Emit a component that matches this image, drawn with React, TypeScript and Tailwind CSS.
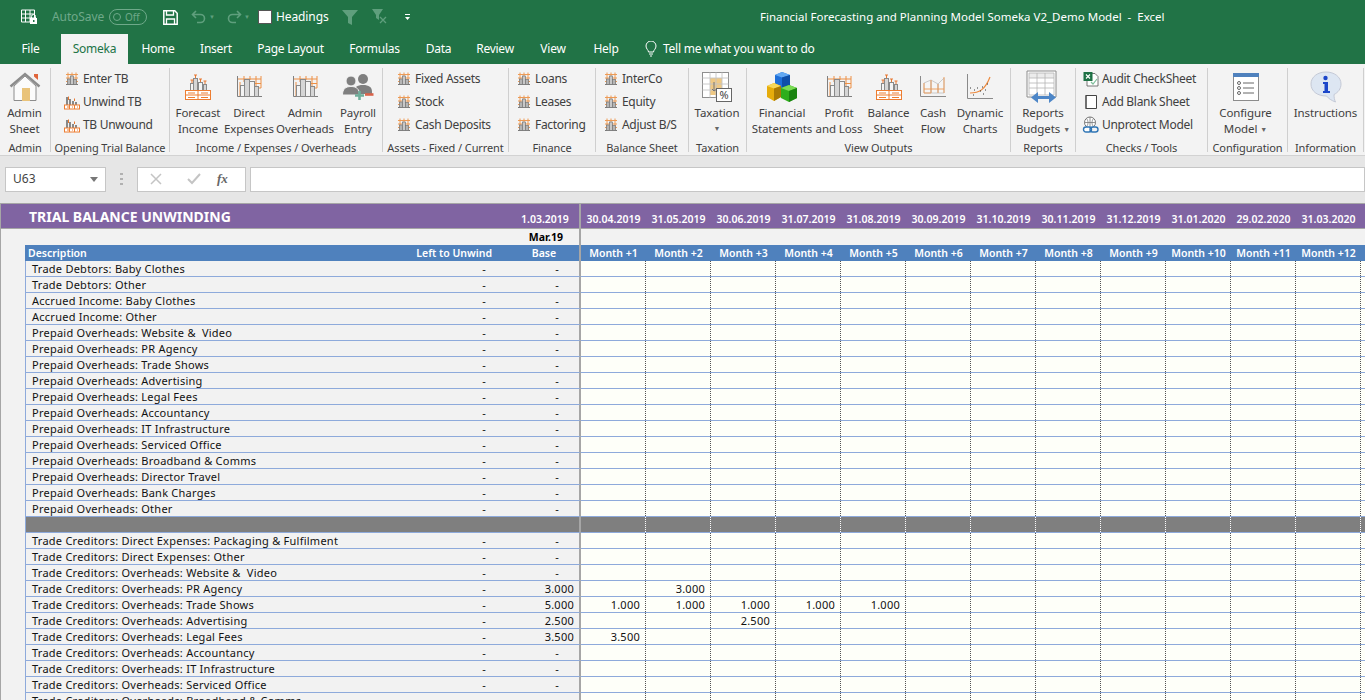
import type { ReactNode } from "react";

const DATES = ["30.04.2019", "31.05.2019", "30.06.2019", "31.07.2019", "31.08.2019", "30.09.2019", "31.10.2019", "30.11.2019", "31.12.2019", "31.01.2020", "29.02.2020", "31.03.2020"];

const ROWS: { name: string; base: string; months?: Record<number, string>; gray?: boolean }[] = [
  { name: "Trade Debtors: Baby Clothes", base: "-" },
  { name: "Trade Debtors: Other", base: "-" },
  { name: "Accrued Income: Baby Clothes", base: "-" },
  { name: "Accrued Income: Other", base: "-" },
  { name: "Prepaid Overheads: Website &  Video", base: "-" },
  { name: "Prepaid Overheads: PR Agency", base: "-" },
  { name: "Prepaid Overheads: Trade Shows", base: "-" },
  { name: "Prepaid Overheads: Advertising", base: "-" },
  { name: "Prepaid Overheads: Legal Fees", base: "-" },
  { name: "Prepaid Overheads: Accountancy", base: "-" },
  { name: "Prepaid Overheads: IT Infrastructure", base: "-" },
  { name: "Prepaid Overheads: Serviced Office", base: "-" },
  { name: "Prepaid Overheads: Broadband & Comms", base: "-" },
  { name: "Prepaid Overheads: Director Travel", base: "-" },
  { name: "Prepaid Overheads: Bank Charges", base: "-" },
  { name: "Prepaid Overheads: Other", base: "-" },
  { name: "", base: "", gray: true },
  { name: "Trade Creditors: Direct Expenses: Packaging & Fulfilment", base: "-" },
  { name: "Trade Creditors: Direct Expenses: Other", base: "-" },
  { name: "Trade Creditors: Overheads: Website &  Video", base: "-" },
  { name: "Trade Creditors: Overheads: PR Agency", base: "3.000", months: { 1: "3.000" } },
  { name: "Trade Creditors: Overheads: Trade Shows", base: "5.000", months: { 0: "1.000", 1: "1.000", 2: "1.000", 3: "1.000", 4: "1.000" } },
  { name: "Trade Creditors: Overheads: Advertising", base: "2.500", months: { 2: "2.500" } },
  { name: "Trade Creditors: Overheads: Legal Fees", base: "3.500", months: { 0: "3.500" } },
  { name: "Trade Creditors: Overheads: Accountancy", base: "-" },
  { name: "Trade Creditors: Overheads: IT Infrastructure", base: "-" },
  { name: "Trade Creditors: Overheads: Serviced Office", base: "-" },
  { name: "Trade Creditors: Overheads: Broadband & Comms", base: "-" },
];

const TABS = [
  { label: "File", w: "w-[61px]" },
  { label: "Someka", w: "w-[67px]", active: true },
  { label: "Home", w: "w-[60px]" },
  { label: "Insert", w: "w-[56px]" },
  { label: "Page Layout", w: "w-[93px]" },
  { label: "Formulas", w: "w-[75px]" },
  { label: "Data", w: "w-[53px]" },
  { label: "Review", w: "w-[60px]" },
  { label: "View", w: "w-[56px]" },
  { label: "Help", w: "w-[50px]" },
];

function GridChart({ size = 14 }: { size?: number }) {
  return (
    <svg width={size} height={size} viewBox="0 0 14 14" fill="none">
      <path d="M1 2.500h12M1 6h12M1 9.500h12M3 0.500v12M7 0.500v12M11 0.500v12" stroke="#ed9a55" strokeWidth="1" />
      <path d="M1 12.500h12" stroke="#777" strokeWidth="1" />
      <rect x="2.500" y="7" width="3" height="5.500" fill="#b5b5b5" stroke="#777" strokeWidth="0.7" />
      <rect x="5.500" y="4" width="3" height="8.500" fill="#c8c8c8" stroke="#777" strokeWidth="0.7" />
      <rect x="8.500" y="7.500" width="3" height="5" fill="#b5b5b5" stroke="#777" strokeWidth="0.7" />
    </svg>
  );
}

function BigGridChart() {
  return (
    <svg width="25" height="21" viewBox="0 0 25 21" fill="none">
      <path d="M7 0v6M13 0v4M19 0v20M24 0v12M1 3h23M15 7.500h9M19 12h5M3 6v14" stroke="#ed8f45" strokeWidth="1" />
      <path d="M0.500 0v20.500H25" stroke="#7f7f7f" strokeWidth="1" />
      <rect x="3.500" y="9.500" width="4" height="11" fill="#f4f4f4" stroke="#8a8a8a" />
      <rect x="7.500" y="3.500" width="5" height="17" fill="#d6d6d6" stroke="#8a8a8a" />
      <rect x="12.500" y="5.500" width="5" height="15" fill="#f4f4f4" stroke="#8a8a8a" />
      <rect x="17.500" y="10.500" width="4" height="10" fill="#d6d6d6" stroke="#8a8a8a" />
    </svg>
  );
}

function TrayChart() {
  return (
    <svg width="26" height="26" viewBox="0 0 26 26" fill="none">
      <rect x="5.500" y="9.500" width="3" height="7" fill="#f4f4f4" stroke="#8a8a8a" />
      <rect x="8.500" y="4.500" width="4" height="12" fill="#d6d6d6" stroke="#8a8a8a" />
      <rect x="13.500" y="8.500" width="4" height="8" fill="#f4f4f4" stroke="#8a8a8a" />
      <rect x="18.500" y="10.500" width="3" height="6" fill="#d6d6d6" stroke="#8a8a8a" />
      <path d="M7 9V6M10.500 4V1M15.500 8V5M20 10V7M5.500 6h3M9 1h3M14 5h3M18.500 7h3" stroke="#e8772e" strokeWidth="1" />
      <rect x="0.500" y="16.500" width="25" height="9" fill="#fff" stroke="#ed7d31" />
      <path d="M0.500 21h25M13 16.500v9M3 19h7M16 19h7M3 23.500h7M16 23.500h7" stroke="#ed7d31" strokeWidth="1" />
    </svg>
  );
}

function SmallTray() {
  return (
    <svg width="16" height="16" viewBox="0 0 16 16" fill="none">
      <path d="M3 11V3M6 11V5M9 11V7M12 11V8" stroke="#888" strokeWidth="2" />
      <path d="M4.500 2.500V6M10.500 4.500V7" stroke="#e8772e" strokeWidth="1" />
      <rect x="0.500" y="11" width="15" height="4" fill="#fff" stroke="#ed7d31" />
      <path d="M5.500 11v4M10.500 11v4M3 13h2M8 13h1M13 13h1" stroke="#ed7d31" />
    </svg>
  );
}

function HouseIcon() {
  return (
    <svg width="32" height="30" viewBox="0 0 32 30" fill="none">
      <path d="M25 2h4v6l-4-3.500z" fill="#e0653a" />
      <path d="M5 14v14.500h22V14L16 4z" fill="#fbfbfb" stroke="#8c8c8c" strokeWidth="1" />
      <path d="M1.500 14.500L16 2l14.500 12.500" stroke="#8c8c8c" strokeWidth="2.400" fill="none" />
      <rect x="13" y="16" width="8" height="13" fill="#e9c37a" />
    </svg>
  );
}

function PayrollIcon() {
  return (
    <svg width="32" height="26" viewBox="0 0 32 26" fill="none">
      <circle cx="21" cy="5" r="5" fill="#7f7f7f" />
      <path d="M12 18c0-5 3-7 9-7s9 2 9 7v2H12z" fill="#7f7f7f" />
      <circle cx="9" cy="7" r="5" fill="#7f7f7f" stroke="#f3f3f3" strokeWidth="1" />
      <path d="M0.500 21c0-6 3-8.500 8.500-8.500s8.500 2.500 8.500 8.500z" fill="#7f7f7f" stroke="#f3f3f3" strokeWidth="1" />
      <path d="M13 21.500h9M17.500 17v9" stroke="#6fae9b" strokeWidth="2.600" />
      <path d="M23 20.500h8.500" stroke="#d9634a" strokeWidth="2.600" />
    </svg>
  );
}

function TaxIcon() {
  return (
    <svg width="32" height="32" viewBox="0 0 32 32" fill="none">
      <rect x="1.500" y="1.500" width="26" height="25" fill="#fff" stroke="#8f8f8f" />
      <rect x="9" y="7" width="12" height="17" fill="#efc984" />
      <path d="M1.500 7h26M1.500 13h26M1.500 19h26M9 1.500v25M15 1.500v25M21 1.500v25" stroke="#c4c4c4" strokeWidth="0.9" />
      <path d="M13 11v9l-2-2M13 20l3-2" stroke="#777" strokeWidth="1" />
      <rect x="15.500" y="17.500" width="15" height="13" fill="#fff" stroke="#666" />
      <text x="23" y="28" fontSize="11" textAnchor="middle" fill="#444" fontFamily="'Noto Sans', sans-serif">%</text>
    </svg>
  );
}

function CubesIcon() {
  return (
    <svg width="32" height="32" viewBox="0 0 32 32" fill="none">
      <path d="M9 4l7-3 8 3v11l-8 3-7-3z" fill="#1f6fd8" />
      <path d="M9 4l7 2.500 8-2.500-8-3z" fill="#62a8f2" />
      <path d="M16 6.500V18l8-3V4z" fill="#0f4fa8" />
      <path d="M1 15l7-3 7 3v11l-7 4-7-4z" fill="#e6ac0b" />
      <path d="M1 15l7 2.500 7-2.500-7-3z" fill="#f7d758" />
      <path d="M8 17.500V30l7-4V15z" fill="#a97a04" />
      <path d="M15 17l8-3 8 3v10l-8 4-8-4z" fill="#2fae1c" />
      <path d="M15 17l8 3 8-3-8-3z" fill="#7bdb54" />
      <path d="M23 20v11l8-4V17z" fill="#1a8310" />
    </svg>
  );
}

function CashFlowIcon() {
  return (
    <svg width="26" height="21" viewBox="0 0 26 21" fill="none">
      <path d="M0.500 0v20.500H26" stroke="#8a8a8a" />
      <path d="M4 7l7-3v13H4zM11 4l7 4v9h-7zM18 8l6-6v15h-6z" fill="#f5f5f5" stroke="#c9c9c9" />
      <path d="M4 7v10h7V4M18 8v9M24 1v16M4 13h20" stroke="#ed9a55" strokeWidth="0.9" />
    </svg>
  );
}

function TrendIcon() {
  return (
    <svg width="26" height="25" viewBox="0 0 26 25" fill="none">
      <path d="M0.500 0v24.500H26" stroke="#8a8a8a" />
      <path d="M3 19c9 0 15-3 20-16" stroke="#ed8a3e" strokeWidth="1.200" />
      <path d="M3 14h1M7 16h1M10 14h1M13 17h1M15 13h1M18 16h1M20 10h1M6 21h1M16 20h1" stroke="#333" strokeWidth="1" />
    </svg>
  );
}

function ReportsIcon() {
  return (
    <svg width="34" height="33" viewBox="0 0 34 33" fill="none">
      <path d="M1 1h29v26H1z" fill="#fff" stroke="#8c8c8c" />
      <path d="M3 3h25v5H3z" fill="#ececec" />
      <path d="M3 3h25v22H3zM3 8h25M3 13h25M3 18h25M11 3v22M19 3v22" stroke="#b5b5b5" strokeWidth="0.8" />
      <path d="M9 27.500h17" stroke="#4d86c7" strokeWidth="3" />
      <path d="M12 22L5 27.500l7 5.500zM23 22l7 5.500-7 5.500z" fill="#4d86c7" />
    </svg>
  );
}

function AuditIcon() {
  return (
    <svg width="16" height="16" viewBox="0 0 16 16" fill="none">
      <path d="M4 2.500h8l3 3V15H4z" fill="#fff" stroke="#555" strokeWidth="0.8" />
      <path d="M8 11l2 2 4-5" stroke="#7fbf9c" strokeWidth="1.200" />
      <rect x="0.500" y="1" width="9" height="9" fill="#1e7145" />
      <path d="M3 3.500l4 4M7 3.500l-4 4" stroke="#fff" strokeWidth="1.200" />
    </svg>
  );
}

function BlankSheetIcon() {
  return (
    <svg width="14" height="16" viewBox="0 0 14 16" fill="none">
      <path d="M2 1.500h10.500v13H2z" fill="#fff" stroke="#444" strokeWidth="1" />
      <path d="M2 1.500v13" stroke="#444" strokeDasharray="1 1" strokeWidth="2" />
    </svg>
  );
}

function UnprotectIcon() {
  return (
    <svg width="18" height="18" viewBox="0 0 18 18" fill="none">
      <circle cx="8" cy="6.500" r="5.500" fill="#fff" stroke="#777" />
      <path d="M2.500 6.500h11M8 1v11M4.500 2.500c2 2.500 2 6 0 8M11.500 2.500c-2 2.500-2 6 0 8" stroke="#777" strokeWidth="0.8" />
      <rect x="1.500" y="11" width="8" height="5" rx="2.500" fill="#fff" stroke="#2f75b5" strokeWidth="1.400" />
      <rect x="8" y="11" width="8" height="5" rx="2.500" fill="none" stroke="#2f75b5" strokeWidth="1.400" />
    </svg>
  );
}

function ConfigIcon() {
  return (
    <svg width="26" height="28" viewBox="0 0 26 28" fill="none">
      <rect x="0.500" y="0.500" width="25" height="27" fill="#fff" stroke="#8c8c8c" />
      <rect x="0" y="0" width="26" height="4" fill="#4f81bd" />
      <circle cx="6" cy="10" r="1.500" stroke="#666" />
      <circle cx="6" cy="15" r="1.500" stroke="#666" />
      <circle cx="6" cy="20" r="1.500" stroke="#666" />
      <path d="M10 10h11M10 15h11M10 20h11" stroke="#666" />
    </svg>
  );
}

function InfoIcon() {
  return (
    <svg width="32" height="32" viewBox="0 0 32 32" fill="none">
      <path d="M16 1c8.500 0 15 5 15 12 0 5-3 8.500-7 10.500 0 3 .5 5.500 1.500 7.500-4-1.500-7-3.500-9-6C7 25 1 20 1 13 1 6 7.500 1 16 1z" fill="#dde6f2" stroke="#c4c9d6" />
      <circle cx="15.500" cy="7" r="2.200" fill="#1c46c9" />
      <path d="M13 11h5v9h2v2h-7v-2h1.500v-7H13z" fill="#1c46c9" />
    </svg>
  );
}

function Group({ w, label, children }: { w: string; label: string; children: ReactNode }) {
  return (
    <div className={`${w} h-[84px] shrink-0 border-r border-[#cfcfcf] flex flex-col`}>
      <div className="h-[72px] flex">{children}</div>
      <div className="h-[12px] leading-[16px] text-center text-[11px] tracking-[-0.1px] whitespace-nowrap">{label}</div>
    </div>
  );
}

function BigButton({ w, icon, lines, caret, below }: { w: string; icon: ReactNode; lines: string[]; caret?: boolean; below?: boolean }) {
  return (
    <div className={`${w} shrink-0 flex flex-col items-center`}>
      <div className="h-[37px] flex items-center justify-center shrink-0">{icon}</div>
      {lines.map((line, i) => (
        <div key={i} className="h-[16px] leading-[16px] whitespace-nowrap text-[11.500px] tracking-[-0.1px]">
          {line}
          {caret && i === lines.length - 1 && <span className="ml-[3px] text-[7px] align-[1px] text-[#666]">▼</span>}
        </div>
      ))}
      {below && <div className="h-[16px] leading-[16px] text-[7px] text-[#666]">▼</div>}
    </div>
  );
}

function SmallList({ items, className = "" }: { items: { icon: ReactNode; label: string }[]; className?: string }) {
  return (
    <div className={`flex flex-col -mt-[1px] ${className}`}>
      {items.map((item) => (
        <div key={item.label} className="h-[23px] flex items-center whitespace-nowrap text-[12px] tracking-[-0.3px]">
          <span className="w-[18px] flex justify-center shrink-0">{item.icon}</span>
          <span className="ml-[2px]">{item.label}</span>
        </div>
      ))}
    </div>
  );
}

function TitleBar() {
  return (
    <div className="h-[34px] bg-[#217346] flex items-center relative text-white">
      <svg className="ml-[20px]" width="18" height="18" viewBox="0 0 18 18" fill="none">
        <path d="M1.500 2h13v12h-13zM1.500 6h13M1.500 10h13M5.500 2v12M10 2v12" stroke="#fff" />
        <rect x="10" y="10" width="7" height="6" fill="#fff" />
        <path d="M11.500 10V8.500a2 2 0 014 0V10" stroke="#fff" />
        <rect x="13" y="12" width="1.500" height="2" fill="#217346" />
      </svg>
      <span className="ml-[14px] text-[12px] text-[#6fa98a] tracking-[-0.1px]">AutoSave</span>
      <div className="ml-[5px] w-[38px] h-[16px] rounded-full border border-[#6fa98a] flex items-center pl-[3px] gap-[4px]">
        <span className="w-[8px] h-[8px] rounded-full border border-[#6fa98a]" />
        <span className="text-[10px] text-[#6fa98a]">Off</span>
      </div>
      <svg className="ml-[16px]" width="15" height="15" viewBox="0 0 15 15" fill="none">
        <path d="M0.800 0.800h11l2.400 2.400v11H0.800z" stroke="#fff" strokeWidth="1.500" />
        <path d="M3.500 1v4h7V1M3.500 14V9h8v5" stroke="#fff" strokeWidth="1.300" />
      </svg>
      <svg className="ml-[13px]" width="16" height="14" viewBox="0 0 16 14" fill="none">
        <path d="M5 1L1.500 4.500 5 8M2 4.500h7.500a4 4 0 010 8H6" stroke="#5f9f7d" strokeWidth="1.600" />
      </svg>
      <span className="ml-[2px] text-[6px] text-[#5f9f7d]">▼</span>
      <svg className="ml-[11px]" width="16" height="14" viewBox="0 0 16 14" fill="none">
        <path d="M11 1l3.500 3.500L11 8M14 4.500H6.500a4 4 0 000 8H10" stroke="#5f9f7d" strokeWidth="1.600" />
      </svg>
      <span className="ml-[2px] text-[6px] text-[#5f9f7d]">▼</span>
      <span className="ml-[8px] w-[14px] h-[14px] bg-white border border-[#555]" />
      <span className="ml-[4px] text-[12px] tracking-[-0.1px]">Headings</span>
      <svg className="ml-[13px]" width="16" height="15" viewBox="0 0 16 15">
        <path d="M0 0h16L10 7v8l-4-2V7z" fill="#5f9f7d" />
      </svg>
      <svg className="ml-[13px]" width="18" height="16" viewBox="0 0 18 16" fill="none">
        <path d="M1 0h11L8 6v5L5 9V6z" fill="#5f9f7d" />
        <path d="M9 8l6 6M15 8l-6 6" stroke="#5f9f7d" strokeWidth="1.300" />
      </svg>
      <svg className="ml-[15px]" width="8" height="8" viewBox="0 0 8 8">
        <path d="M1 1h5v1H1zM1 4h5L3.500 7z" fill="#fff" />
      </svg>
      <span className="absolute left-[760px] top-[8px] text-[11.500px] whitespace-pre">Financial Forecasting and Planning Model Someka V2_Demo Model  -  Excel</span>
    </div>
  );
}

function TabBar() {
  return (
    <div className="h-[30px] bg-[#217346] flex text-[12px] tracking-[-0.25px] text-white">
      {TABS.map((tab) => (
        <div
          key={tab.label}
          className={`${tab.w} flex items-center justify-center ${tab.active ? "bg-[#f3f3f3] text-[#217346]" : ""}`}
        >
          {tab.label}
        </div>
      ))}
      <div className="flex items-center ml-[13px]">
        <svg width="14" height="16" viewBox="0 0 14 16" fill="none">
          <path d="M4.500 11c0-2-2.500-3-2.500-6a5 5 0 0110 0c0 3-2.500 4-2.500 6z" stroke="#fff" />
          <path d="M5 13h4M6 15h2" stroke="#fff" />
        </svg>
        <span className="ml-[5px]">Tell me what you want to do</span>
      </div>
    </div>
  );
}

function Ribbon() {
  return (
    <div className="h-[92px] bg-[#f3f3f3] border-b border-[#d2d2d2] pt-[4px] flex text-[#404040]">
      <Group w="w-[51px]" label="Admin">
        <BigButton w="w-[49px]" icon={<HouseIcon />} lines={["Admin", "Sheet"]} />
      </Group>
      <Group w="w-[119px]" label="Opening Trial Balance">
        <SmallList
          className="pl-[12px]"
          items={[
            { icon: <GridChart />, label: "Enter TB" },
            { icon: <SmallTray />, label: "Unwind TB" },
            { icon: <SmallTray />, label: "TB Unwound" },
          ]}
        />
      </Group>
      <Group w="w-[213px]" label="Income / Expenses / Overheads">
        <div className="w-[2px]" />
        <BigButton w="w-[52px]" icon={<TrayChart />} lines={["Forecast", "Income"]} />
        <BigButton w="w-[50px]" icon={<BigGridChart />} lines={["Direct", "Expenses"]} />
        <BigButton w="w-[62px]" icon={<BigGridChart />} lines={["Admin", "Overheads"]} />
        <BigButton w="w-[44px]" icon={<PayrollIcon />} lines={["Payroll", "Entry"]} />
      </Group>
      <Group w="w-[126px]" label="Assets - Fixed / Current">
        <SmallList
          className="pl-[12px]"
          items={[
            { icon: <GridChart />, label: "Fixed Assets" },
            { icon: <GridChart />, label: "Stock" },
            { icon: <GridChart />, label: "Cash Deposits" },
          ]}
        />
      </Group>
      <Group w="w-[87px]" label="Finance">
        <SmallList
          className="pl-[6px]"
          items={[
            { icon: <GridChart />, label: "Loans" },
            { icon: <GridChart />, label: "Leases" },
            { icon: <GridChart />, label: "Factoring" },
          ]}
        />
      </Group>
      <Group w="w-[93px]" label="Balance Sheet">
        <SmallList
          className="pl-[6px]"
          items={[
            { icon: <GridChart />, label: "InterCo" },
            { icon: <GridChart />, label: "Equity" },
            { icon: <GridChart />, label: "Adjust B/S" },
          ]}
        />
      </Group>
      <Group w="w-[58px]" label="Taxation">
        <BigButton w="w-[56px]" icon={<TaxIcon />} lines={["Taxation"]} below />
      </Group>
      <Group w="w-[264px]" label="View Outputs">
        <div className="w-[5px]" />
        <BigButton w="w-[60px]" icon={<CubesIcon />} lines={["Financial", "Statements"]} />
        <BigButton w="w-[54px]" icon={<BigGridChart />} lines={["Profit", "and Loss"]} />
        <BigButton w="w-[45px]" icon={<TrayChart />} lines={["Balance", "Sheet"]} />
        <BigButton w="w-[44px]" icon={<CashFlowIcon />} lines={["Cash", "Flow"]} />
        <BigButton w="w-[50px]" icon={<TrendIcon />} lines={["Dynamic", "Charts"]} />
      </Group>
      <Group w="w-[65px]" label="Reports">
        <BigButton w="w-[64px]" icon={<ReportsIcon />} lines={["Reports", "Budgets"]} caret />
      </Group>
      <Group w="w-[132px]" label="Checks / Tools">
        <SmallList
          className="pl-[6px]"
          items={[
            { icon: <AuditIcon />, label: "Audit CheckSheet" },
            { icon: <BlankSheetIcon />, label: "Add Blank Sheet" },
            { icon: <UnprotectIcon />, label: "Unprotect Model" },
          ]}
        />
      </Group>
      <Group w="w-[80px]" label="Configuration">
        <BigButton w="w-[75px]" icon={<ConfigIcon />} lines={["Configure", "Model"]} caret />
      </Group>
      <Group w="w-[76px]" label="Information">
        <BigButton w="w-[75px]" icon={<InfoIcon />} lines={["Instructions"]} />
      </Group>
    </div>
  );
}

function FormulaBar() {
  return (
    <div className="h-[47px] bg-[#e6e6e6] flex items-center pb-[1px] pl-[5px] pr-0">
      <div className="w-[101px] h-[25px] bg-white border border-[#c6c6c6] flex items-center justify-between pl-[7px] pr-[7px] text-[12px] text-[#444]">
        U63
        <svg width="8" height="5" viewBox="0 0 8 5"><path d="M0 0h8L4 5z" fill="#777" /></svg>
      </div>
      <div className="w-[31px] flex justify-center">
        <svg width="3" height="12" viewBox="0 0 3 12"><path d="M0 0h3v2H0zM0 5h3v2H0zM0 10h3v2H0z" fill="#b1b1b1" /></svg>
      </div>
      <div className="w-[109px] h-[25px] bg-white border border-[#c6c6c6] flex items-center pl-[12px]">
        <svg width="12" height="12" viewBox="0 0 12 12" fill="none"><path d="M1 1l10 10M11 1L1 11" stroke="#c4c4c4" strokeWidth="1.500" /></svg>
        <svg className="ml-[25px]" width="14" height="12" viewBox="0 0 14 12" fill="none"><path d="M1 6l4 4 8-9" stroke="#c4c4c4" strokeWidth="2" /></svg>
        <span className="ml-[16px] text-[13px] italic font-['Liberation_Serif',serif] font-bold text-[#666]">fx</span>
      </div>
      <div className="ml-[4px] flex-1 h-[25px] bg-white border border-[#c6c6c6]" />
    </div>
  );
}

function SheetHeader() {
  return (
    <>
      <div className="h-[26px] bg-[#8064a2] border-t border-b border-[#a6a6a6] flex text-white">
        <div className="w-[520px] pl-[28px] text-[14px] font-bold leading-[25px]">TRIAL BALANCE UNWINDING</div>
        <div className="w-[60px] border-r-2 border-[#a6a6a6] text-[10.500px] font-semibold leading-[30px] whitespace-nowrap">1.03.2019</div>
        {DATES.map((d) => (
          <div key={d} className="w-[65px] shrink-0 text-center text-[10.500px] font-semibold leading-[30px]">{d}</div>
        ))}
      </div>
      <div className="h-[16px] flex">
        <div className="w-[580px] border-r-2 border-[#a6a6a6] flex justify-end pr-[16px] text-[10.500px] font-bold text-black leading-[16px]">Mar.19</div>
      </div>
      <div className="h-[16px] flex">
        <div className="w-[24px]" />
        <div className="w-[556px] bg-[#4f81bd] border-r-2 border-[#a6a6a6] flex text-white text-[10.500px] leading-[16px]">
          <div className="w-[395px] pl-[3px] font-semibold">Description</div>
          <div className="w-[72px] text-right font-semibold whitespace-nowrap flex justify-end">Left to Unwind</div>
          <div className="flex-1 text-center pl-[17px] font-semibold">Base</div>
        </div>
        <div className="flex-1 bg-[#4f81bd] flex text-white text-[10.500px] leading-[16px]">
          {DATES.map((_, i) => (
            <div key={i} className="w-[65px] shrink-0 text-center font-semibold">Month +{i + 1}</div>
          ))}
        </div>
      </div>
    </>
  );
}

function SheetRow({ row }: { row: (typeof ROWS)[number] }) {
  return (
    <div className="h-[16px] flex">
      <div className="w-[24px] shrink-0" />
      <div className={`w-[556px] shrink-0 flex border-l border-b border-r-2 border-l-[#8eaadb] border-b-[#8eaadb] border-r-[#a6a6a6] ${row.gray ? "bg-[#7f7f7f]" : ""}`}>
        <div className="w-[394px] pl-[6px] whitespace-pre leading-[15px]">{row.name}</div>
        <div className="w-[66px] text-right leading-[15px]">{row.gray ? "" : "-"}</div>
        <div className={`w-[93px] text-right leading-[15px] ${row.base === "-" ? "pr-[20px]" : "pr-[5px]"}`}>{row.base}</div>
      </div>
      <div className={`flex-1 flex border-b border-[#8eaadb] ${row.gray ? "bg-[#7f7f7f]" : "bg-[#fefff9]"}`}>
        {DATES.map((_, i) => (
          <div
            key={i}
            className={`w-[65px] shrink-0 border-r border-dotted pr-[5px] text-right leading-[15px] ${row.gray ? "border-white" : "border-[#555]"}`}
          >
            {row.months?.[i] ?? ""}
          </div>
        ))}
      </div>
    </div>
  );
}

export default function App() {
  return (
    <div className="w-[1365px] h-[700px] overflow-hidden bg-[#e6e6e6] font-['Noto_Sans',sans-serif]">
      <TitleBar />
      <TabBar />
      <Ribbon />
      <FormulaBar />
      <div className="h-[497px] bg-[#f2f2f2] border-l border-[#a6a6a6] overflow-hidden">
        <SheetHeader />
        <div className="text-[11px] tracking-[0.25px] text-[#111]">
          {ROWS.map((row, i) => (
            <SheetRow key={i} row={row} />
          ))}
        </div>
      </div>
    </div>
  );
}
